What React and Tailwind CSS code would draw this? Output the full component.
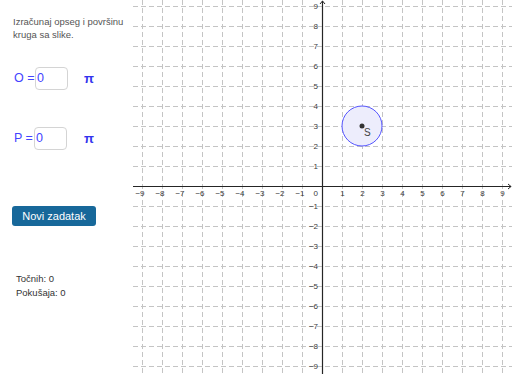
import React from "react";

const OX = 189;
const OY = 186;
const U = 20;
const ks = [-9, -8, -7, -6, -5, -4, -3, -2, -1, 0, 1, 2, 3, 4, 5, 6, 7, 8, 9];

function Graph() {
  return (
    <svg width="379" height="374" viewBox="0 0 379 374" className="block" style={{ fontFamily: '"Liberation Sans", Arial, sans-serif' }}>
      <rect x="0" y="0" width="379" height="374" fill="#ffffff" />
      {ks.map((k) => (
        <line key={"v" + k} x1={OX + k * U + 0.5} y1="0" x2={OX + k * U + 0.5} y2="374" stroke="#c4c4c4" strokeWidth="1" strokeDasharray="5 3" />
      ))}
      {ks.map((k) => (
        <line key={"h" + k} x1="0" y1={OY + k * U + 0.5} x2="379" y2={OY + k * U + 0.5} stroke="#c4c4c4" strokeWidth="1" strokeDasharray="5 3" />
      ))}
      {/* axes */}
      <line x1="0" y1={OY + 0.5} x2="378" y2={OY + 0.5} stroke="#252525" strokeWidth="1.2" />
      <line x1={OX + 0.5} y1="1" x2={OX + 0.5} y2="374" stroke="#252525" strokeWidth="1.2" />
      <polyline points={`${OX - 2},4 ${OX + 0.5},1 ${OX + 3},4`} fill="none" stroke="#252525" strokeWidth="1" />
      <polyline points={`375,${OY - 2} 378,${OY + 0.5} 375,${OY + 3}`} fill="none" stroke="#252525" strokeWidth="1" />
      {/* x labels */}
      {ks.filter((k) => k !== 0).map((k) => (
        <text key={"lx" + k} x={OX + k * U + (k < 0 ? -2 : 0.5)} y={OY + 10} fontSize="8" fill="#3a3a3a" textAnchor="middle">
          {k < 0 ? "\u2212" + -k : k}
        </text>
      ))}
      {/* y labels */}
      {ks.filter((k) => k !== 0).map((k) => (
        <text key={"ly" + k} x={OX - 4} y={OY - k * U + 3} fontSize="8" fill="#3a3a3a" textAnchor="end">
          {k < 0 ? "\u2212" + -k : k}
        </text>
      ))}
      <text x={OX - 4} y={OY + 10} fontSize="8" fill="#3a3a3a" textAnchor="end">0</text>
      {/* circle */}
      <circle cx={OX + 2 * U} cy={OY - 3 * U} r={U} fill="#ededfc" stroke="#5555ff" strokeWidth="1" />
      <circle cx={OX + 2 * U} cy={OY - 3 * U} r="2.5" fill="#333333" />
      <text x={OX + 2 * U + 2} y={OY - 3 * U + 10} fontSize="10" fill="#444444">S</text>
    </svg>
  );
}

export default function App() {
  return (
    <div className="flex w-[512px] h-[374px] bg-white overflow-hidden" style={{ fontFamily: '"Liberation Sans", Arial, sans-serif' }}>
      <div className="w-[133px] shrink-0 flex flex-col">
        <div className="pt-[15px] pl-[13px] text-[9.5px] leading-[13px] text-[#555555]">
          <div>Izračunaj opseg i površinu</div>
          <div>kruga sa slike.</div>
        </div>
        <div className="mt-[26px] flex items-center h-[23px]">
          <span className="ml-[14px] w-[21px] text-[12.5px] text-[#4444ff] whitespace-nowrap">O =</span>
          <div className="w-[33px] h-[23px] border border-[#d4d4d4] rounded-[4px] flex items-center pl-[1px] text-[12.5px] text-[#4444ff]">0</div>
          <span className="ml-[16px] text-[13px] font-bold text-[#3333ee]">π</span>
        </div>
        <div className="mt-[37px] flex items-center h-[23px]">
          <span className="ml-[14px] w-[20px] text-[12.5px] text-[#4444ff] whitespace-nowrap">P =</span>
          <div className="w-[33px] h-[23px] border border-[#d4d4d4] rounded-[4px] flex items-center pl-[1px] text-[12.5px] text-[#4444ff]">0</div>
          <span className="ml-[17px] text-[13px] font-bold text-[#3333ee]">π</span>
        </div>
        <div className="mt-[56px] ml-[12px] w-[84px] h-[20px] rounded-[3px] bg-[#17689a] text-white text-[11px] flex items-center justify-center">
          Novi zadatak
        </div>
        <div className="mt-[46px] pl-[16px] text-[9.5px] leading-[14px] text-[#333333]">
          <div>Točnih: 0</div>
          <div>Pokušaja: 0</div>
        </div>
      </div>
      <Graph />
    </div>
  );
}
